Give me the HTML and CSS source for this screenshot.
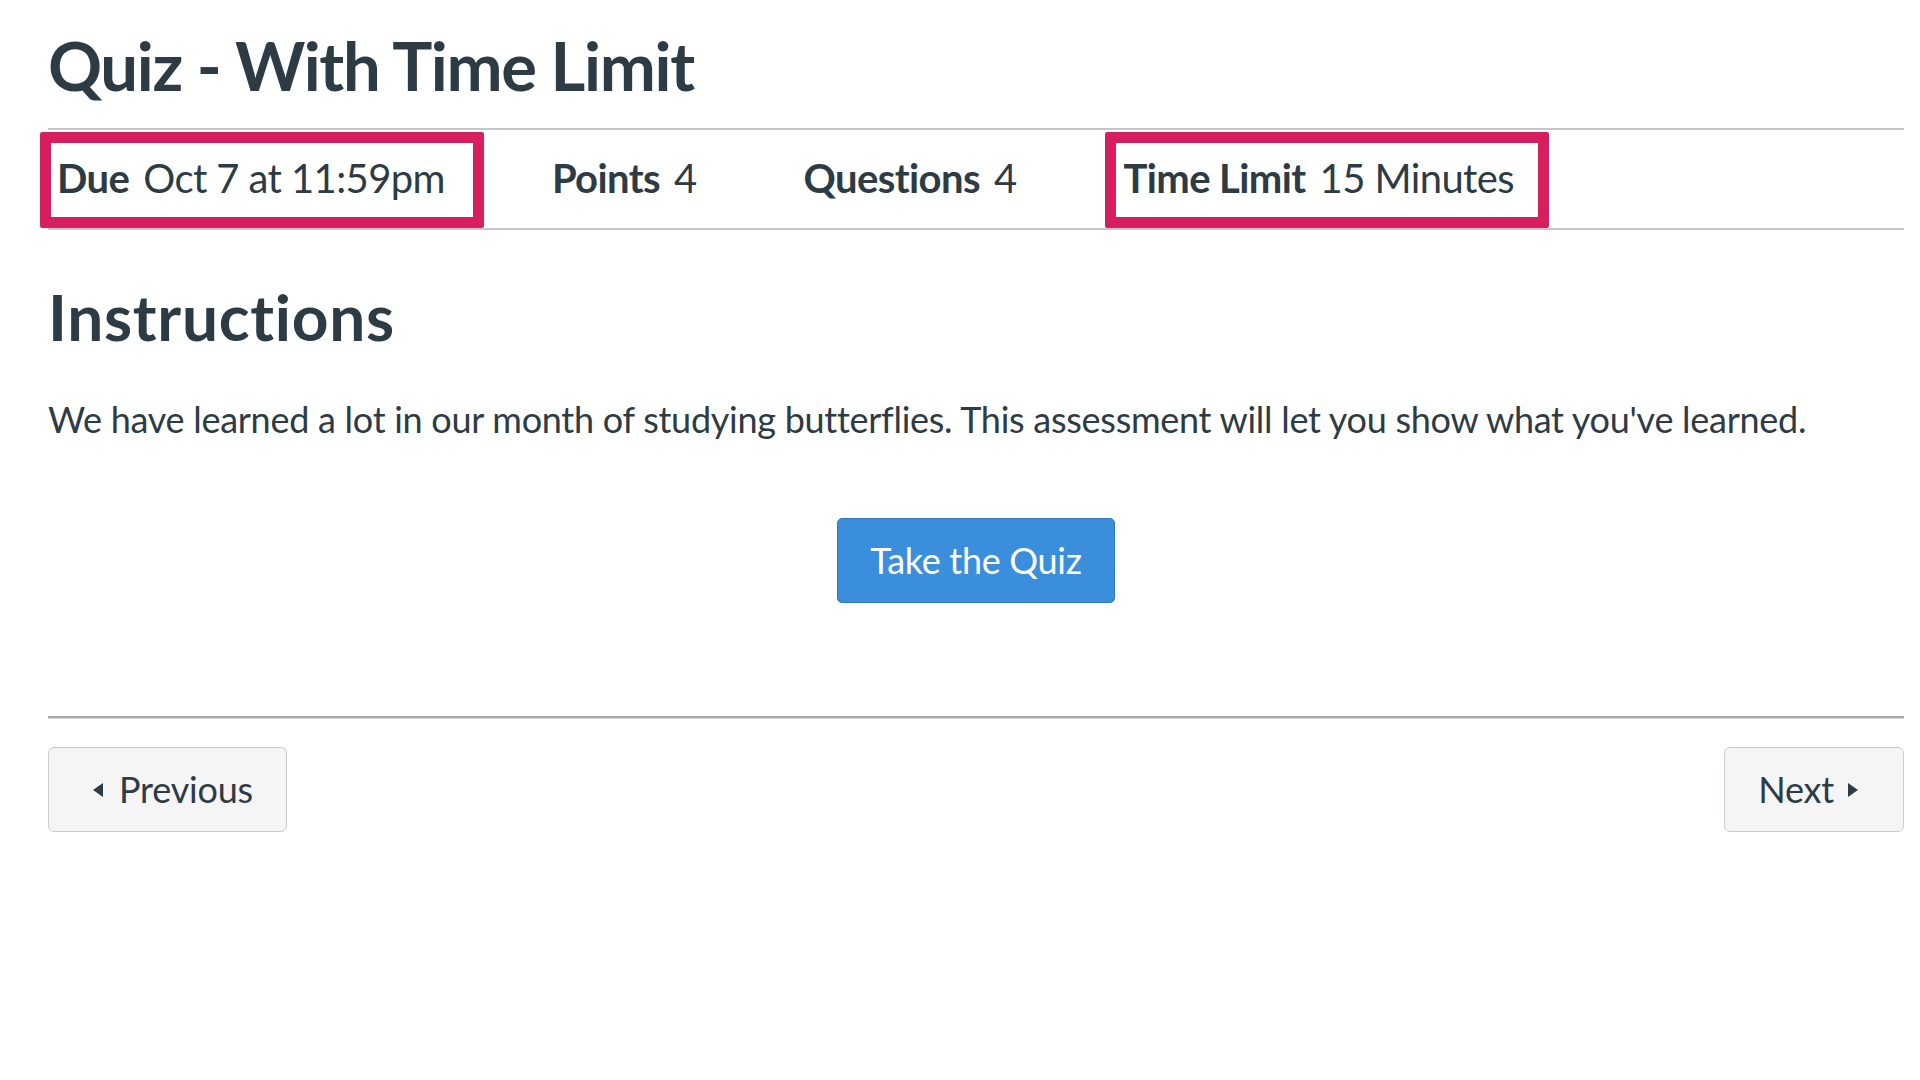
FILE: index.html
```html
<!DOCTYPE html>
<html lang="en">
<head>
<meta charset="utf-8">
<title>Quiz - With Time Limit</title>
<link rel="stylesheet" href="styles.css">
</head>
<body>
<main class="page">
  <h1 class="quiz-title">Quiz - With Time Limit</h1>
  <ul class="quiz-meta">
    <li class="meta-item highlight hl-due"><span class="meta-label">Due</span><span class="meta-value">Oct 7 at 11:59pm</span></li>
    <li class="meta-item"><span class="meta-label">Points</span><span class="meta-value">4</span></li>
    <li class="meta-item"><span class="meta-label">Questions</span><span class="meta-value">4</span></li>
    <li class="meta-item highlight hl-time"><span class="meta-label">Time Limit</span><span class="meta-value">15 Minutes</span></li>
  </ul>
  <section class="instructions">
    <h2 class="instructions-title">Instructions</h2>
    <p class="instructions-text">We have learned a lot in our month of studying butterflies. This assessment will let you show what you've learned.</p>
  </section>
  <div class="take-quiz">
    <button class="btn-primary" type="button">Take the Quiz</button>
  </div>
  <nav class="module-nav">
    <button class="btn-nav btn-prev" type="button"><svg class="caret" viewBox="0 0 10 14" width="10" height="14" aria-hidden="true"><path d="M10 0 L10 14 L0 7 Z"/></svg><span>Previous</span></button>
    <button class="btn-nav btn-next" type="button"><span>Next</span><svg class="caret" viewBox="0 0 10 14" width="10" height="14" aria-hidden="true"><path d="M0 0 L0 14 L10 7 Z"/></svg></button>
  </nav>
</main>
</body>
</html>
```

FILE: styles.css
```css
*, *::before, *::after { box-sizing: border-box; }

html, body {
  margin: 0;
  padding: 0;
  background: #ffffff;
}

body {
  font-family: Lato, "Open Sans", "Liberation Sans", sans-serif;
  color: #2d3b45;
  font-variant-ligatures: none;
  font-feature-settings: "liga" 0, "clig" 0;
}

.page {
  padding: 0 16px 0 48px;
}

.quiz-title {
  margin: 25px 0 23px;
  font-size: 67px;
  line-height: 1.2;
  font-weight: 700;
  letter-spacing: -1.35px;
}

.quiz-meta {
  list-style: none;
  margin: 0;
  padding: 0 0 0 9px;
  display: flex;
  gap: 107px;
  border-top: 2px solid #c4c7ca;
  border-bottom: 2px solid #c4c7ca;
  height: 102px;
}

.meta-item {
  position: relative;
  display: flex;
  align-items: baseline;
  padding-top: 24px;
  font-size: 40px;
  line-height: 1.2;
  letter-spacing: -0.6px;
}

.meta-label {
  font-weight: 700;
  margin-right: 14px;
}

.meta-value {
  font-weight: 400;
}

.highlight::before {
  content: "";
  position: absolute;
  top: 2px;
  bottom: 0;
  width: 444px;
  border: 11px solid #d71f5f;
  border-radius: 2px;
}

.hl-due::before { left: -17px; }
.hl-time::before { left: -19px; }

.instructions-title {
  margin: 49px 0 0;
  font-size: 64px;
  line-height: 1.2;
  font-weight: 700;
  letter-spacing: 0.7px;
}

.instructions-text {
  margin: 36px 0 0;
  font-size: 36px;
  line-height: 1.5;
  letter-spacing: -0.27px;
}

.take-quiz {
  display: flex;
  justify-content: center;
  margin-top: 72px;
}

.btn-primary {
  font-family: inherit;
  font-size: 36px;
  line-height: 1.2;
  letter-spacing: -0.3px;
  color: #ffffff;
  background: #3a8edb;
  border: 1px solid #2f7bc3;
  border-radius: 5px;
  padding: 20px 32px;
}

.module-nav {
  display: flex;
  justify-content: space-between;
  margin-top: 113px;
  padding-top: 29px;
  border-top: 2px solid #a6a9ac;
  box-shadow: inset 0 1px 0 #d8dadc;
}

.btn-nav {
  display: flex;
  align-items: center;
  font-family: inherit;
  font-size: 36px;
  line-height: 1.2;
  letter-spacing: -0.2px;
  color: #2d3b45;
  background: #f5f5f5;
  border: 1px solid #c7cdd1;
  border-radius: 6px;
  height: 85px;
  gap: 16px;
}

.btn-prev { padding: 0 33px 0 44px; }
.btn-next { padding: 0 45px 0 33px; gap: 14px; }

.caret {
  display: block;
  fill: #2d3b45;
}
```
